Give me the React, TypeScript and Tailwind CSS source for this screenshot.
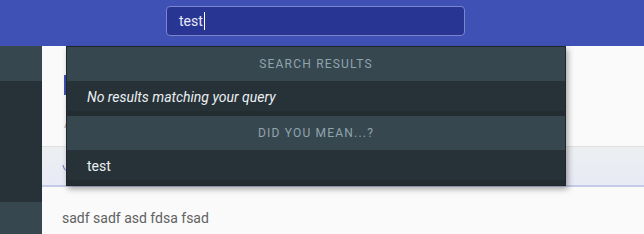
import React from 'react';

const font = { fontFamily: 'Roboto, "Liberation Sans", sans-serif' };

const SearchPopup: React.FC<{ query: string }> = ({ query }) => (
  <div className="absolute left-[-100px] top-[40px] z-10 w-[500px] border border-[#1e272b] bg-[#222c31] shadow-[2px_3px_6px_rgba(0,0,0,0.35)]">
    <div className="flex h-[34px] items-center justify-center bg-[#37474f] text-[12px] uppercase tracking-[0.1em] text-[#90a4ae]">
      Search Results
    </div>
    <div className="pb-[5px]">
      <div className="flex h-[30px] items-center bg-[#263238] px-5 pt-[2px] text-[14px] italic text-[#eceff1]">
        No results matching your query
      </div>
    </div>
    <div className="flex h-[34px] items-center justify-center bg-[#37474f] text-[12px] uppercase tracking-[0.1em] text-[#90a4ae]">
      Did you mean...?
    </div>
    <div className="pb-[5px]">
      <div className="flex h-[30px] items-center bg-[#263238] px-5 pt-[2px] text-[14px] text-[#eceff1]">
        {query}
      </div>
    </div>
  </div>
);

export default function App() {
  const query = 'test';

  return (
    <div className="flex h-[234px] w-[644px] flex-col overflow-hidden bg-[#fafafa]" style={font}>
      <header className="flex h-[46px] shrink-0 items-start bg-[#3f51b5] pl-[166px] pt-[6px]">
        <div className="relative">
          <div className="flex h-[30px] w-[299px] items-center rounded-[4px] border border-[#7986cb] bg-[#283593] pl-3 text-[14px] text-[#e8eaf6]">
            {query}
            <span className="ml-px inline-block h-[18px] w-px bg-white" />
          </div>
          <SearchPopup query={query} />
        </div>
      </header>

      <div className="flex flex-1">
        <aside className="flex w-[42px] shrink-0 flex-col bg-[#37474f]">
          <div className="h-[35px]" />
          <div className="h-[121px] bg-[#263238]" />
        </aside>

        <main className="flex flex-1 flex-col">
          <div className="h-[101px] border-b border-[#e0e0e0] pl-[22px]">
            <div className="mt-[29px] h-[20px] w-[120px] bg-[#3f51b5]" />
            <div className="mt-[18px] text-[13px] text-[#9e9e9e]">/</div>
          </div>
          <div className="flex h-[40px] items-center border-b-2 border-[#c5cae9] bg-gradient-to-b from-[#eceff1] to-[#e8eaf6] pl-[20px]">
            <svg width="8" height="10" viewBox="0 0 8 10" className="mt-[4px]">
              <path d="M1 2 Q2 8 7 8" fill="none" stroke="#7986cb" strokeWidth="1.2" />
            </svg>
          </div>
          <div className="pl-[20px] pt-[21px] text-[14px] text-[#616161]">sadf sadf asd fdsa fsad</div>
        </main>
      </div>
    </div>
  );
}
